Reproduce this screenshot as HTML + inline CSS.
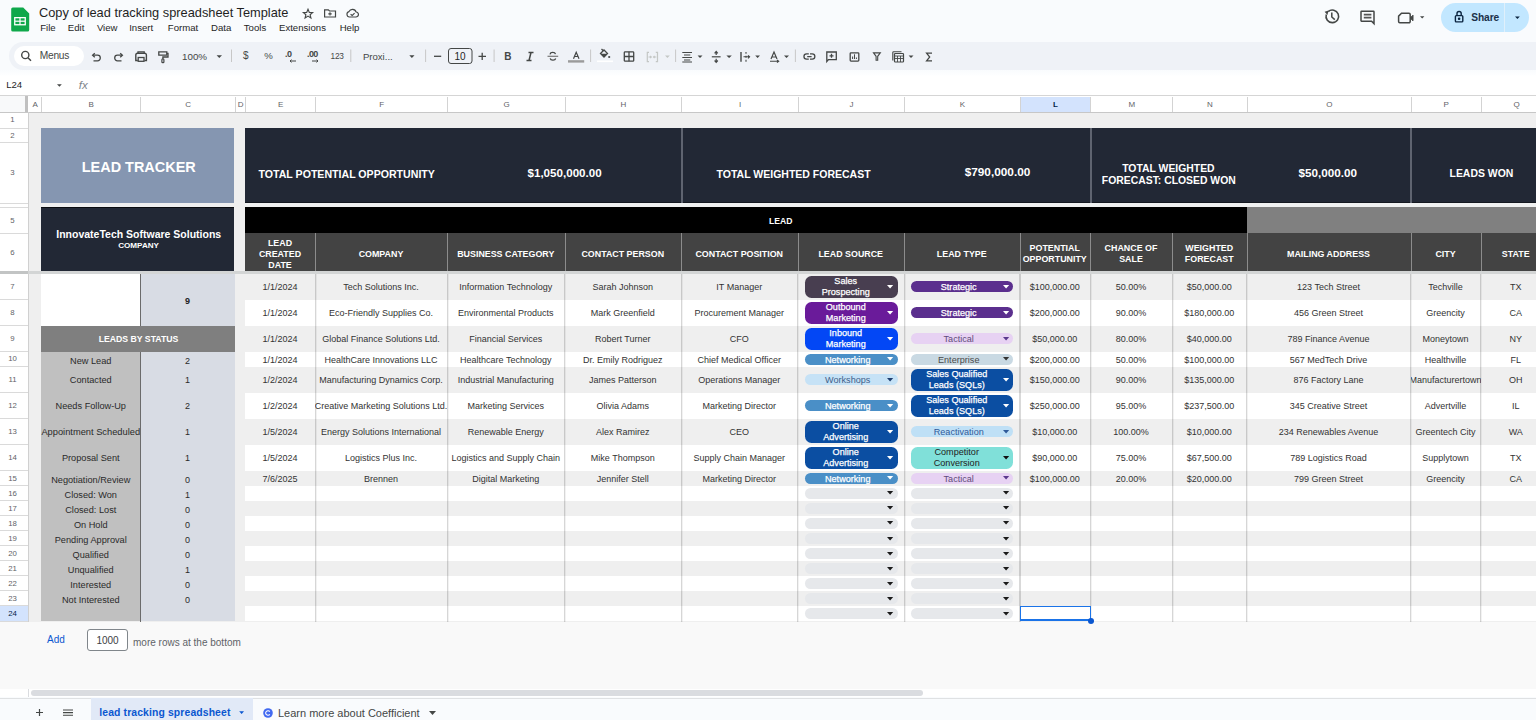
<!DOCTYPE html>
<html><head><meta charset="utf-8"><title>lead tracking spreadsheet</title>
<style>
*{margin:0;padding:0;box-sizing:border-box}
html,body{width:1536px;height:720px;overflow:hidden;background:#f9fbfd;font-family:"Liberation Sans",sans-serif;position:relative}
div{position:absolute}
.c{display:flex;align-items:center;justify-content:center;text-align:center;overflow:hidden;white-space:nowrap;color:#222;font-size:8px;line-height:1.1}
.h{color:#fff;font-weight:bold}
.chip{display:flex;align-items:center;justify-content:center;color:#fff;font-size:8px;line-height:9px;text-align:center;white-space:normal;overflow:hidden}
.arr{width:0;height:0;border-left:3.5px solid transparent;border-right:3.5px solid transparent;border-top:4px solid #fff}
.ui{font-family:"Liberation Sans",sans-serif;color:#444746}
svg{position:absolute}
</style></head><body>
<svg style="left:11px;top:7px" width="19" height="25" viewBox="0 0 19 25">
<path d="M1.8 0.4H12.2L18.2 6.4V23A1.6 1.6 0 0 1 16.6 24.6H1.8A1.6 1.6 0 0 1 0.2 23V2A1.6 1.6 0 0 1 1.8 0.4Z" fill="#0fa84b"/>
<rect x="3.1" y="10" width="11.8" height="8.4" fill="#fff"/>
<rect x="4.4" y="11.3" width="4" height="2.3" fill="#0fa84b"/><rect x="9.6" y="11.3" width="4" height="2.3" fill="#0fa84b"/>
<rect x="4.4" y="14.8" width="4" height="2.3" fill="#0fa84b"/><rect x="9.6" y="14.8" width="4" height="2.3" fill="#0fa84b"/>
</svg><div class="" style="left:39px;top:5px;width:300px;height:16px;font-size:12.8px;color:#1f1f1f;line-height:16px;white-space:nowrap">Copy of lead tracking spreadsheet Template</div><div class="" style="left:40.2px;top:22.3px;width:70px;height:12px;font-size:9.6px;color:#1f1f1f;line-height:12px;white-space:nowrap">File</div><div class="" style="left:67.8px;top:22.3px;width:70px;height:12px;font-size:9.6px;color:#1f1f1f;line-height:12px;white-space:nowrap">Edit</div><div class="" style="left:96.9px;top:22.3px;width:70px;height:12px;font-size:9.6px;color:#1f1f1f;line-height:12px;white-space:nowrap">View</div><div class="" style="left:129.2px;top:22.3px;width:70px;height:12px;font-size:9.6px;color:#1f1f1f;line-height:12px;white-space:nowrap">Insert</div><div class="" style="left:167.8px;top:22.3px;width:70px;height:12px;font-size:9.6px;color:#1f1f1f;line-height:12px;white-space:nowrap">Format</div><div class="" style="left:211px;top:22.3px;width:70px;height:12px;font-size:9.6px;color:#1f1f1f;line-height:12px;white-space:nowrap">Data</div><div class="" style="left:243.8px;top:22.3px;width:70px;height:12px;font-size:9.6px;color:#1f1f1f;line-height:12px;white-space:nowrap">Tools</div><div class="" style="left:279px;top:22.3px;width:70px;height:12px;font-size:9.6px;color:#1f1f1f;line-height:12px;white-space:nowrap">Extensions</div><div class="" style="left:339.7px;top:22.3px;width:70px;height:12px;font-size:9.6px;color:#1f1f1f;line-height:12px;white-space:nowrap">Help</div><svg style="left:0;top:0" width="1536" height="100" viewBox="0 0 1536 100" fill="none" stroke="#444746" stroke-width="1.25">
<!-- star --><path d="M308 9.3L309.3 12.4L312.6 12.6L310.1 14.7L310.9 17.9L308 16.1L305.1 17.9L305.9 14.7L303.4 12.6L306.7 12.4Z" stroke-width="1.15"/>
<!-- folder --><path d="M324.6 9.8H328.3L329.5 11H335.5V17H324.6Z" stroke-width="1.2"/><path d="M330 12.2V15.6M328.3 13.9H331.7" stroke-width="1.1"/>
<!-- cloud --><path d="M349.5 17H355.8A2.5 2.5 0 0 0 356.1 12A3.8 3.8 0 0 0 349 11.6A2.75 2.75 0 0 0 349.5 17Z" stroke-width="1.15"/><path d="M350.6 14.3L352.2 15.5L354.6 13.1" stroke-width="1.1"/>
<!-- history --><path d="M1326.3 14.5A6.3 6.3 0 1 0 1328.2 11.6" stroke-width="1.6"/><path d="M1324.6 11.8L1328.6 10.6L1327.4 15Z" fill="#444746" stroke="none"/><path d="M1331.8 12.6V17L1334.8 19.6" stroke-width="1.5"/>
<!-- comment --><path d="M1361.5 11.3H1373.5A0.6 0.6 0 0 1 1374 11.8V23.6L1371.6 21.2H1361.5A0.6 0.6 0 0 1 1361 20.7V11.8A0.6 0.6 0 0 1 1361.5 11.3Z" stroke-width="1.5"/><path d="M1363.8 14.6H1371.4M1363.8 17.6H1371.4" stroke-width="1.6" stroke="#555"/>
<!-- meet --><path d="M1401.5 13.2H1409A1.2 1.2 0 0 1 1410.2 14.4V21.6A1.2 1.2 0 0 1 1409 22.8H1399.8A1.2 1.2 0 0 1 1398.6 21.6V16.1Z" stroke-width="1.5"/><path d="M1410.2 18L1413 15.2V20.8Z" fill="#444746" stroke-width="1"/>
<path d="M1420 16.2H1424.4L1422.2 18.4Z" fill="#444746" stroke="none"/>
</svg><div class="" style="left:1441px;top:3px;width:87.5px;height:28.7px;background:#c2e7ff;border-radius:14.5px"></div><div class="" style="left:1504px;top:3px;width:1px;height:28.7px;background:#e0f0fb"></div><svg style="left:1452px;top:9px" width="14" height="15" viewBox="0 0 14 15" fill="none" stroke="#0b2440" stroke-width="1.4">
<rect x="3.4" y="6.6" width="7.4" height="6.3" rx="0.9"/><path d="M5 6.6V4.6A2.1 2.1 0 0 1 9.2 4.6V6.6"/><circle cx="7.1" cy="9.8" r="0.6" fill="#0b2440"/></svg><div class="" style="left:1471.3px;top:11.2px;width:40px;height:14px;font-size:10.2px;color:#1b3149;line-height:14px;font-weight:bold;letter-spacing:-0.1px">Share</div><svg style="left:1513.5px;top:16px" width="8" height="5" viewBox="0 0 8 5"><path d="M1 0.6H5.8L3.4 3Z" fill="#0b2440"/></svg><div class="" style="left:8.5px;top:42px;width:1600px;height:28px;background:#eff2f7;border-radius:14px"></div><div class="" style="left:14.4px;top:46px;width:69.2px;height:19.6px;background:#fff;border-radius:10px"></div><div class="" style="left:39.8px;top:48.6px;width:40px;height:13px;font-size:10.2px;color:#444746;line-height:13px;letter-spacing:-0.25px">Menus</div><svg style="left:0px;top:0px" width="1000" height="72" viewBox="0 0 1000 72" fill="none" stroke="#444746" stroke-width="1.3">
<!-- search --><circle cx="25.3" cy="55" r="3.6" stroke-width="1.4"/><path d="M28 57.8L31 60.8" stroke-width="1.5"/>
<!-- undo --><path d="M93 55.2H97.5A2.8 2.8 0 0 1 97.5 60.8H93.5"/><path d="M94.8 53.2L92.6 55.2L94.8 57.2"/>
<!-- redo --><path d="M122 55.2H117.5A2.8 2.8 0 0 0 117.5 60.8H121.5"/><path d="M120.2 53.2L122.4 55.2L120.2 57.2"/>
<!-- print --><path d="M137.8 60.5H135.8V55A1.8 1.8 0 0 1 137.6 53.2H144.6A1.8 1.8 0 0 1 146.4 55V60.5H144.4" stroke-width="1.4"/><path d="M138 53V51.8H144.2V53" stroke-width="1.3"/><rect x="138.2" y="57.5" width="5.8" height="3.8" stroke-width="1.3"/>
<!-- paint format --><path d="M158.8 51.8H166.8V55.2H158.8Z" stroke-width="1.3"/><path d="M166.8 53.5H168V57H162.9V59" stroke-width="1.3"/><rect x="161.9" y="59" width="2" height="3.7" rx="0.8" stroke-width="1.2"/>
<!-- zoom arrow --><path d="M216.6 55.2H222L219.3 57.9Z" fill="#444746" stroke="none"/>
<path d="M231.5 49.5V62" stroke="#c7c7c7" stroke-width="1"/>
<!-- .0 arrows --><path d="M290 61H296M291.5 59.6L290 61L291.5 62.4" stroke-width="1"/>
<path d="M312 61H318M316.5 59.6L318 61L316.5 62.4" stroke-width="1"/>
<path d="M350.8 49.5V62" stroke="#c7c7c7" stroke-width="1"/>
<path d="M409.3 55.2H414.5L411.9 57.9Z" fill="#444746" stroke="none"/>
<path d="M425.6 49.5V62" stroke="#c7c7c7" stroke-width="1"/>
<path d="M434 56.3H441.2" stroke-width="1.3"/>
<rect x="448.5" y="48.5" width="23.5" height="15" rx="2.5" stroke="#444746" stroke-width="1"/>
<path d="M482.2 52.7V60M478.5 56.3H486" stroke-width="1.3"/>
<path d="M494.1 49.5V62" stroke="#c7c7c7" stroke-width="1"/>
<!-- S strike --><path d="M547.5 56.3H558.2" stroke="#777" stroke-width="1.2"/>
<path d="M555.5 54.2A2.8 2.2 0 0 0 550 54.3" stroke-width="1.3"/><path d="M550.2 58.3A2.8 2.2 0 0 0 555.7 58.5" stroke-width="1.3"/>
<!-- A underline --><path d="M573.5 58.8L576.2 52.3L579 58.8M574.5 56.5H578" stroke-width="1.2"/><rect x="568" y="60.2" width="16.2" height="2.4" fill="#9b9b9b" stroke="none"/>
<path d="M590.6 49.5V62" stroke="#c7c7c7" stroke-width="1"/>
<!-- fill --><path d="M600.5 53.5L604 50L607.5 53.5L604 57Z" stroke-width="1.3"/><path d="M601 53.8H607L604 57Z" fill="#444746" stroke="none"/><path d="M601.5 49L603.5 51" stroke-width="1.2"/><circle cx="609.2" cy="57" r="1.1" fill="#444746" stroke="none"/>
<rect x="597" y="60.5" width="16" height="1.6" fill="#fff" stroke="none"/>
<!-- borders --><rect x="624.3" y="51.8" width="9.4" height="9.4" rx="0.8" stroke-width="1.3"/><path d="M629 51.8V61.2M624.3 56.5H633.7" stroke-width="1.3"/>
<!-- merge --><g stroke="#c4c7c5" stroke-width="1.2"><path d="M649 52.3H647.3V61.7H649M655.8 52.3H657.5V61.7H655.8"/><path d="M648.5 57H651.2M650.2 56L651.2 57L650.2 58M656.3 57H653.6M654.6 56L653.6 57L654.6 58"/></g>
<path d="M665 55.5H669.8L667.4 58Z" fill="#c4c7c5" stroke="none"/>
<path d="M675.6 49.5V62" stroke="#c7c7c7" stroke-width="1"/>
<!-- halign --><path d="M682.3 52.5H692M684 55H690.3M682.3 57.5H692M684 60H690.3M682.3 62H692" stroke-width="1.2"/>
<path d="M697.6 55.5H702.5L700 58Z" fill="#444746" stroke="none"/>
<!-- valign --><path d="M711.8 56.8H720.6" stroke-width="1.2"/><path d="M716.2 51.5V55M714.6 53.3L716.2 51.5L717.8 53.3M716.2 62.3V58.7M714.6 60.5L716.2 62.3L717.8 60.5" stroke-width="1.2"/>
<path d="M726.4 55.5H731.8L729.1 58Z" fill="#444746" stroke="none"/>
<!-- wrap --><path d="M741 52V61.8" stroke-width="1.4"/><path d="M746 52V53.8M746 55.8V57.7M746 59.7V61.8" stroke-width="1.1"/><path d="M743.5 56.8H749.5M748 55.3L749.6 56.8L748 58.3" stroke-width="1.1"/>
<path d="M755.2 55.5H760L757.6 58Z" fill="#444746" stroke="none"/>
<!-- rotate --><path d="M771 59L774 52L777 59M772 57H776" stroke-width="1.2"/><path d="M770 61.3H778.5M777 60L778.7 61.3L777 62.6" stroke-width="1.1"/>
<path d="M784 55.5H789L786.5 58Z" fill="#444746" stroke="none"/>
<path d="M795.4 49.5V62" stroke="#c7c7c7" stroke-width="1"/>
<!-- link --><path d="M808.8 53.9H806.6A2.65 2.65 0 0 0 806.6 59.2H808.8M810 53.9H812.2A2.65 2.65 0 0 1 812.2 59.2H810M807.2 56.55H811.6" stroke-width="1.3"/>
<!-- comment --><path d="M826.8 52H836.3V59.6H828.5L826.8 61.5Z" stroke-width="1.3"/><path d="M831.5 53.8V57.8M829.5 55.8H833.5" stroke-width="1.3"/>
<!-- chart --><rect x="850.2" y="52.8" width="8.6" height="8.3" rx="0.8" stroke-width="1.3"/><path d="M852.6 59V56.5M854.5 59V54.3M856.4 59V57.5" stroke-width="1"/>
<!-- filter --><path d="M873.5 52.9H880.3L877.7 56.3V60.3H876.1V56.3Z" stroke-width="1.1"/>
<!-- functions table --><rect x="894.5" y="53.5" width="9" height="8.5" rx="0.8" stroke-width="1.2"/><path d="M892.8 60.5V52.5A0.8 0.8 0 0 1 893.6 51.7H901.5" stroke-width="1.1"/><path d="M894.5 56H903.5M894.5 58.5H903.5M897.5 56V62M900.5 56V62" stroke-width="0.9"/>
<path d="M908.6 55.5H913.5L911 58Z" fill="#444746" stroke="none"/>
<!-- sigma --><path d="M932 53.2H926.6L929.7 57L926.6 60.8H932" stroke-width="1.25"/>
</svg><div class="" style="left:182px;top:49.5px;width:40px;height:13px;font-size:9.8px;color:#444746;line-height:13px;white-space:nowrap">100%</div><div class="" style="left:243px;top:48.8px;width:10px;height:13px;font-size:10px;color:#444746;line-height:13px">$</div><div class="" style="left:264.3px;top:48.8px;width:10px;height:13px;font-size:9.6px;color:#444746;line-height:13px">%</div><div class="" style="left:285px;top:47.5px;width:15px;height:12px;font-size:9px;color:#444746;line-height:12px;font-weight:bold;letter-spacing:-0.4px">.0</div><div class="" style="left:307px;top:47.5px;width:15px;height:12px;font-size:9px;color:#444746;line-height:12px;font-weight:bold;letter-spacing:-0.6px">.00</div><div class="" style="left:330.5px;top:50px;width:20px;height:12px;font-size:8.3px;color:#444746;line-height:12px;letter-spacing:-0.2px">123</div><div class="" style="left:362.9px;top:49.5px;width:40px;height:13px;font-size:9.6px;color:#444746;line-height:13px;white-space:nowrap">Proxi...</div><div class="" style="left:454.5px;top:49.5px;width:15px;height:13px;font-size:10px;color:#1f1f1f;line-height:13px">10</div><div class="" style="left:504.2px;top:50px;width:10px;height:13px;font-size:10px;color:#444746;line-height:13px;font-weight:bold">B</div><svg style="left:525px;top:51px" width="10" height="11" viewBox="0 0 10 11" fill="none" stroke="#444746" stroke-width="1.5"><path d="M3.5 1.5H8.5M1.5 9.5H6.5M6 1.5L4 9.5"/></svg><div class="" style="left:0px;top:70px;width:1536px;height:26px;background:linear-gradient(#f9fbfd 0px,#fdfeff 5px,#fff 6px)"></div><div class="" style="left:6.2px;top:78.6px;width:30px;height:12px;font-size:9.6px;color:#1f1f1f;line-height:12px">L24</div><svg style="left:56px;top:83px" width="8" height="5" viewBox="0 0 8 5"><path d="M1 1.3H5.8L3.4 3.8Z" fill="#444746"/></svg><div class="" style="left:78.8px;top:77.5px;width:20px;height:14px;font-size:11.5px;color:#80868b;line-height:14px;font-style:italic;font-family:"Liberation Serif",serif">fx</div><div class="" style="left:0px;top:96px;width:1536px;height:525.3px;background:#fff"></div><div class="" style="left:0px;top:96px;width:25px;height:16px;background:#f8f9fa"></div><div class="" style="left:25px;top:96px;width:3px;height:16px;background:#c0c0c0"></div><div class="c" style="left:28px;top:96.5px;width:13px;height:15.5px;background:#fff;color:#5f6368;font-weight:normal;font-size:8px;line-height:15.5px;padding-left:1.5px">A</div><div class="c" style="left:41px;top:96.5px;width:99px;height:15.5px;background:#fff;color:#5f6368;font-weight:normal;font-size:8px;line-height:15.5px;padding-left:1.5px">B</div><div class="c" style="left:140px;top:96.5px;width:95px;height:15.5px;background:#fff;color:#5f6368;font-weight:normal;font-size:8px;line-height:15.5px;padding-left:1.5px">C</div><div class="c" style="left:235px;top:96.5px;width:10px;height:15.5px;background:#fff;color:#5f6368;font-weight:normal;font-size:8px;line-height:15.5px;padding-left:1.5px">D</div><div class="c" style="left:245px;top:96.5px;width:70px;height:15.5px;background:#fff;color:#5f6368;font-weight:normal;font-size:8px;line-height:15.5px;padding-left:1.5px">E</div><div class="c" style="left:315px;top:96.5px;width:132px;height:15.5px;background:#fff;color:#5f6368;font-weight:normal;font-size:8px;line-height:15.5px;padding-left:1.5px">F</div><div class="c" style="left:447px;top:96.5px;width:117.5px;height:15.5px;background:#fff;color:#5f6368;font-weight:normal;font-size:8px;line-height:15.5px;padding-left:1.5px">G</div><div class="c" style="left:564.5px;top:96.5px;width:116.5px;height:15.5px;background:#fff;color:#5f6368;font-weight:normal;font-size:8px;line-height:15.5px;padding-left:1.5px">H</div><div class="c" style="left:681px;top:96.5px;width:116.5px;height:15.5px;background:#fff;color:#5f6368;font-weight:normal;font-size:8px;line-height:15.5px;padding-left:1.5px">I</div><div class="c" style="left:797.5px;top:96.5px;width:106.5px;height:15.5px;background:#fff;color:#5f6368;font-weight:normal;font-size:8px;line-height:15.5px;padding-left:1.5px">J</div><div class="c" style="left:904px;top:96.5px;width:115.5px;height:15.5px;background:#fff;color:#5f6368;font-weight:normal;font-size:8px;line-height:15.5px;padding-left:1.5px">K</div><div class="c" style="left:1019.5px;top:96.5px;width:70.5px;height:15.5px;background:#d3e3fd;color:#041e49;font-weight:bold;font-size:8px;line-height:15.5px;padding-left:1.5px">L</div><div class="c" style="left:1090px;top:96.5px;width:82px;height:15.5px;background:#fff;color:#5f6368;font-weight:normal;font-size:8px;line-height:15.5px;padding-left:1.5px">M</div><div class="c" style="left:1172px;top:96.5px;width:74.5px;height:15.5px;background:#fff;color:#5f6368;font-weight:normal;font-size:8px;line-height:15.5px;padding-left:1.5px">N</div><div class="c" style="left:1246.5px;top:96.5px;width:164.0px;height:15.5px;background:#fff;color:#5f6368;font-weight:normal;font-size:8px;line-height:15.5px;padding-left:1.5px">O</div><div class="c" style="left:1410.5px;top:96.5px;width:70.0px;height:15.5px;background:#fff;color:#5f6368;font-weight:normal;font-size:8px;line-height:15.5px;padding-left:1.5px">P</div><div class="c" style="left:1480.5px;top:96.5px;width:70.5px;height:15.5px;background:#fff;color:#5f6368;font-weight:normal;font-size:8px;line-height:15.5px;padding-left:1.5px">Q</div><div class="" style="left:41px;top:96.5px;width:1px;height:15.5px;background:#d3d3d3"></div><div class="" style="left:140px;top:96.5px;width:1px;height:15.5px;background:#d3d3d3"></div><div class="" style="left:235px;top:96.5px;width:1px;height:15.5px;background:#d3d3d3"></div><div class="" style="left:245px;top:96.5px;width:1px;height:15.5px;background:#d3d3d3"></div><div class="" style="left:315px;top:96.5px;width:1px;height:15.5px;background:#d3d3d3"></div><div class="" style="left:447px;top:96.5px;width:1px;height:15.5px;background:#d3d3d3"></div><div class="" style="left:564.5px;top:96.5px;width:1px;height:15.5px;background:#d3d3d3"></div><div class="" style="left:681px;top:96.5px;width:1px;height:15.5px;background:#d3d3d3"></div><div class="" style="left:797.5px;top:96.5px;width:1px;height:15.5px;background:#d3d3d3"></div><div class="" style="left:904px;top:96.5px;width:1px;height:15.5px;background:#d3d3d3"></div><div class="" style="left:1019.5px;top:96.5px;width:1px;height:15.5px;background:#d3d3d3"></div><div class="" style="left:1090px;top:96.5px;width:1px;height:15.5px;background:#d3d3d3"></div><div class="" style="left:1172px;top:96.5px;width:1px;height:15.5px;background:#d3d3d3"></div><div class="" style="left:1246.5px;top:96.5px;width:1px;height:15.5px;background:#d3d3d3"></div><div class="" style="left:1410.5px;top:96.5px;width:1px;height:15.5px;background:#d3d3d3"></div><div class="" style="left:1480.5px;top:96.5px;width:1px;height:15.5px;background:#d3d3d3"></div><div class="" style="left:1551px;top:96.5px;width:1px;height:15.5px;background:#d3d3d3"></div><div class="" style="left:0px;top:95px;width:1536px;height:1px;background:#d5d5d5"></div><div class="" style="left:0px;top:112px;width:1536px;height:1px;background:#c7c7c7"></div><div class="c" style="left:0px;top:112.6px;width:25px;height:16px;background:#fff;color:#5f6368;font-weight:normal;font-size:7.8px">1</div><div class="c" style="left:0px;top:128.6px;width:25px;height:14.5px;background:#fff;color:#5f6368;font-weight:normal;font-size:7.8px">2</div><div class="c" style="left:0px;top:143.1px;width:25px;height:60.5px;background:#fff;color:#5f6368;font-weight:normal;font-size:7.8px">3</div><div class="c" style="left:0px;top:203.6px;width:25px;height:4.5px;background:#fff;color:#5f6368;font-weight:normal;font-size:7.8px"></div><div class="c" style="left:0px;top:208.1px;width:25px;height:26.0px;background:#fff;color:#5f6368;font-weight:normal;font-size:7.8px">5</div><div class="c" style="left:0px;top:234.1px;width:25px;height:37.5px;background:#fff;color:#5f6368;font-weight:normal;font-size:7.8px">6</div><div class="c" style="left:0px;top:274.1px;width:25px;height:26.0px;background:#fff;color:#5f6368;font-weight:normal;font-size:7.8px">7</div><div class="c" style="left:0px;top:300.1px;width:25px;height:26.0px;background:#fff;color:#5f6368;font-weight:normal;font-size:7.8px">8</div><div class="c" style="left:0px;top:326.1px;width:25px;height:26.0px;background:#fff;color:#5f6368;font-weight:normal;font-size:7.8px">9</div><div class="c" style="left:0px;top:352.1px;width:25px;height:15.0px;background:#fff;color:#5f6368;font-weight:normal;font-size:7.8px">10</div><div class="c" style="left:0px;top:367.1px;width:25px;height:26.0px;background:#fff;color:#5f6368;font-weight:normal;font-size:7.8px">11</div><div class="c" style="left:0px;top:393.1px;width:25px;height:26.0px;background:#fff;color:#5f6368;font-weight:normal;font-size:7.8px">12</div><div class="c" style="left:0px;top:419.1px;width:25px;height:26.0px;background:#fff;color:#5f6368;font-weight:normal;font-size:7.8px">13</div><div class="c" style="left:0px;top:445.1px;width:25px;height:26.30000000000001px;background:#fff;color:#5f6368;font-weight:normal;font-size:7.8px">14</div><div class="c" style="left:0px;top:471.40000000000003px;width:25px;height:14.899999999999977px;background:#fff;color:#5f6368;font-weight:normal;font-size:7.8px">15</div><div class="c" style="left:0px;top:486.3px;width:25px;height:15.0px;background:#fff;color:#5f6368;font-weight:normal;font-size:7.8px">16</div><div class="c" style="left:0px;top:501.3px;width:25px;height:15.000000000000057px;background:#fff;color:#5f6368;font-weight:normal;font-size:7.8px">17</div><div class="c" style="left:0px;top:516.3000000000001px;width:25px;height:15.099999999999909px;background:#fff;color:#5f6368;font-weight:normal;font-size:7.8px">18</div><div class="c" style="left:0px;top:531.4px;width:25px;height:15.0px;background:#fff;color:#5f6368;font-weight:normal;font-size:7.8px">19</div><div class="c" style="left:0px;top:546.4px;width:25px;height:15.0px;background:#fff;color:#5f6368;font-weight:normal;font-size:7.8px">20</div><div class="c" style="left:0px;top:561.4px;width:25px;height:15.0px;background:#fff;color:#5f6368;font-weight:normal;font-size:7.8px">21</div><div class="c" style="left:0px;top:576.4px;width:25px;height:15.0px;background:#fff;color:#5f6368;font-weight:normal;font-size:7.8px">22</div><div class="c" style="left:0px;top:591.4px;width:25px;height:15.0px;background:#fff;color:#5f6368;font-weight:normal;font-size:7.8px">23</div><div class="c" style="left:0px;top:606.4px;width:25px;height:15.5px;background:#d3e3fd;color:#041e49;font-weight:normal;font-size:7.8px">24</div><div class="" style="left:25px;top:605.8px;width:3px;height:15.5px;background:#d3e3fd"></div><div class="" style="left:0px;top:127.5px;width:28px;height:1px;background:#dadada"></div><div class="" style="left:0px;top:142.0px;width:28px;height:1px;background:#dadada"></div><div class="" style="left:0px;top:202.5px;width:28px;height:1px;background:#dadada"></div><div class="" style="left:0px;top:207.0px;width:28px;height:1px;background:#dadada"></div><div class="" style="left:0px;top:233.0px;width:28px;height:1px;background:#dadada"></div><div class="" style="left:0px;top:270.5px;width:28px;height:1px;background:#dadada"></div><div class="" style="left:0px;top:299.0px;width:28px;height:1px;background:#dadada"></div><div class="" style="left:0px;top:325.0px;width:28px;height:1px;background:#dadada"></div><div class="" style="left:0px;top:351.0px;width:28px;height:1px;background:#dadada"></div><div class="" style="left:0px;top:366.0px;width:28px;height:1px;background:#dadada"></div><div class="" style="left:0px;top:392.0px;width:28px;height:1px;background:#dadada"></div><div class="" style="left:0px;top:418.0px;width:28px;height:1px;background:#dadada"></div><div class="" style="left:0px;top:444.0px;width:28px;height:1px;background:#dadada"></div><div class="" style="left:0px;top:470.3px;width:28px;height:1px;background:#dadada"></div><div class="" style="left:0px;top:485.2px;width:28px;height:1px;background:#dadada"></div><div class="" style="left:0px;top:500.2px;width:28px;height:1px;background:#dadada"></div><div class="" style="left:0px;top:515.2px;width:28px;height:1px;background:#dadada"></div><div class="" style="left:0px;top:530.3px;width:28px;height:1px;background:#dadada"></div><div class="" style="left:0px;top:545.3px;width:28px;height:1px;background:#dadada"></div><div class="" style="left:0px;top:560.3px;width:28px;height:1px;background:#dadada"></div><div class="" style="left:0px;top:575.3px;width:28px;height:1px;background:#dadada"></div><div class="" style="left:0px;top:590.3px;width:28px;height:1px;background:#dadada"></div><div class="" style="left:0px;top:605.3px;width:28px;height:1px;background:#dadada"></div><div class="" style="left:0px;top:620.8px;width:28px;height:1px;background:#dadada"></div><div class="" style="left:27.5px;top:112px;width:1px;height:510px;background:#d0d0d0"></div><div class="" style="left:28.5px;top:112.5px;width:1536px;height:158.5px;background:#efefef"></div><div class="" style="left:41px;top:127.5px;width:193px;height:75px;background:#8596b1"></div><div style="left:-11.25px;width:300px;text-align:center;top:158.68px;font-size:14.45px;line-height:16.62px;font-weight:bold;white-space:nowrap;color:#fff">LEAD TRACKER</div><div class="" style="left:245px;top:127.5px;width:1300px;height:75px;background:#222835;border-bottom:1px solid #141820"></div><div style="left:258.5px;top:167.83px;font-size:10.6px;line-height:12.19px;font-weight:bold;white-space:nowrap;color:#fff">TOTAL POTENTIAL OPPORTUNITY</div><div style="left:527.5px;top:166.31px;font-size:11.6px;line-height:13.34px;font-weight:bold;white-space:nowrap;color:#fff">$1,050,000.00</div><div style="left:716.6px;top:167.92px;font-size:10.5px;line-height:12.07px;font-weight:bold;white-space:nowrap;color:#fff">TOTAL WEIGHTED FORECAST</div><div style="left:964.7px;top:166.13px;font-size:11.8px;line-height:13.57px;font-weight:bold;white-space:nowrap;color:#fff">$790,000.00</div><div style="left:1018.4000000000001px;width:300px;text-align:center;top:162.92px;font-size:10.4px;line-height:11.96px;font-weight:bold;white-space:nowrap;color:#fff">TOTAL WEIGHTED</div><div style="left:1018.8px;width:300px;text-align:center;top:175.02px;font-size:10.4px;line-height:11.96px;font-weight:bold;white-space:nowrap;color:#fff">FORECAST: CLOSED WON</div><div style="left:1298.5px;top:166.22px;font-size:11.7px;line-height:13.45px;font-weight:bold;white-space:nowrap;color:#fff">$50,000.00</div><div style="left:1449.5px;top:168.17px;font-size:10.45px;line-height:12.02px;font-weight:bold;white-space:nowrap;color:#fff">LEADS WON</div><div class="" style="left:680.5px;top:127.5px;width:2px;height:75px;background:#5f6470"></div><div class="" style="left:1089.5px;top:127.5px;width:2px;height:75px;background:#5f6470"></div><div class="" style="left:1409.8px;top:127.5px;width:2px;height:75px;background:#5f6470"></div><div class="" style="left:245px;top:202.5px;width:1300px;height:4.8px;background:#f0f1f1"></div><div class="" style="left:41px;top:207.3px;width:193px;height:63.7px;background:#222835;border-top:1px solid #0a0c10"></div><div style="left:-11.25px;width:300px;text-align:center;top:228.12px;font-size:10.5px;line-height:12.07px;font-weight:bold;white-space:nowrap;color:#fff">InnovateTech Software Solutions</div><div style="left:-11.400000000000006px;width:300px;text-align:center;top:240.94px;font-size:8.1px;line-height:9.31px;font-weight:bold;white-space:nowrap;color:#fff">COMPANY</div><div class="" style="left:245px;top:207.3px;width:1001.5px;height:25.9px;background:#000"></div><div style="left:630.7px;width:300px;text-align:center;top:216.58px;font-size:8.6px;line-height:9.89px;font-weight:bold;white-space:nowrap;color:#fff">LEAD</div><div class="" style="left:1246.5px;top:207.3px;width:300px;height:25.9px;background:#808080"></div><div class="" style="left:245px;top:233.2px;width:1300px;height:38px;background:#434343"></div><div style="left:130.0px;width:300px;text-align:center;top:237.90px;font-size:8.9px;line-height:10.23px;font-weight:bold;white-space:nowrap;color:#fff">LEAD</div><div style="left:130.0px;width:300px;text-align:center;top:248.80px;font-size:8.9px;line-height:10.23px;font-weight:bold;white-space:nowrap;color:#fff">CREATED</div><div style="left:130.0px;width:300px;text-align:center;top:259.70px;font-size:8.9px;line-height:10.23px;font-weight:bold;white-space:nowrap;color:#fff">DATE</div><div class="" style="left:315px;top:233.2px;width:1px;height:38px;background:#8c8c8c"></div><div style="left:231.0px;width:300px;text-align:center;top:248.80px;font-size:8.9px;line-height:10.23px;font-weight:bold;white-space:nowrap;color:#fff">COMPANY</div><div class="" style="left:447px;top:233.2px;width:1px;height:38px;background:#8c8c8c"></div><div style="left:355.75px;width:300px;text-align:center;top:248.80px;font-size:8.9px;line-height:10.23px;font-weight:bold;white-space:nowrap;color:#fff">BUSINESS CATEGORY</div><div class="" style="left:564.5px;top:233.2px;width:1px;height:38px;background:#8c8c8c"></div><div style="left:472.75px;width:300px;text-align:center;top:248.80px;font-size:8.9px;line-height:10.23px;font-weight:bold;white-space:nowrap;color:#fff">CONTACT PERSON</div><div class="" style="left:681px;top:233.2px;width:1px;height:38px;background:#8c8c8c"></div><div style="left:589.25px;width:300px;text-align:center;top:248.80px;font-size:8.9px;line-height:10.23px;font-weight:bold;white-space:nowrap;color:#fff">CONTACT POSITION</div><div class="" style="left:797.5px;top:233.2px;width:1px;height:38px;background:#8c8c8c"></div><div style="left:700.75px;width:300px;text-align:center;top:248.80px;font-size:8.9px;line-height:10.23px;font-weight:bold;white-space:nowrap;color:#fff">LEAD SOURCE</div><div class="" style="left:904px;top:233.2px;width:1px;height:38px;background:#8c8c8c"></div><div style="left:811.75px;width:300px;text-align:center;top:248.80px;font-size:8.9px;line-height:10.23px;font-weight:bold;white-space:nowrap;color:#fff">LEAD TYPE</div><div class="" style="left:1019.5px;top:233.2px;width:1px;height:38px;background:#8c8c8c"></div><div style="left:904.75px;width:300px;text-align:center;top:243.35px;font-size:8.9px;line-height:10.23px;font-weight:bold;white-space:nowrap;color:#fff">POTENTIAL</div><div style="left:904.75px;width:300px;text-align:center;top:254.25px;font-size:8.9px;line-height:10.23px;font-weight:bold;white-space:nowrap;color:#fff">OPPORTUNITY</div><div class="" style="left:1090px;top:233.2px;width:1px;height:38px;background:#8c8c8c"></div><div style="left:981.0px;width:300px;text-align:center;top:243.35px;font-size:8.9px;line-height:10.23px;font-weight:bold;white-space:nowrap;color:#fff">CHANCE OF</div><div style="left:981.0px;width:300px;text-align:center;top:254.25px;font-size:8.9px;line-height:10.23px;font-weight:bold;white-space:nowrap;color:#fff">SALE</div><div class="" style="left:1172px;top:233.2px;width:1px;height:38px;background:#8c8c8c"></div><div style="left:1059.25px;width:300px;text-align:center;top:243.35px;font-size:8.9px;line-height:10.23px;font-weight:bold;white-space:nowrap;color:#fff">WEIGHTED</div><div style="left:1059.25px;width:300px;text-align:center;top:254.25px;font-size:8.9px;line-height:10.23px;font-weight:bold;white-space:nowrap;color:#fff">FORECAST</div><div class="" style="left:1246.5px;top:233.2px;width:1px;height:38px;background:#8c8c8c"></div><div style="left:1178.5px;width:300px;text-align:center;top:248.80px;font-size:8.9px;line-height:10.23px;font-weight:bold;white-space:nowrap;color:#fff">MAILING ADDRESS</div><div class="" style="left:1410.5px;top:233.2px;width:1px;height:38px;background:#8c8c8c"></div><div style="left:1295.5px;width:300px;text-align:center;top:248.80px;font-size:8.9px;line-height:10.23px;font-weight:bold;white-space:nowrap;color:#fff">CITY</div><div class="" style="left:1480.5px;top:233.2px;width:1px;height:38px;background:#8c8c8c"></div><div style="left:1365.75px;width:300px;text-align:center;top:248.80px;font-size:8.9px;line-height:10.23px;font-weight:bold;white-space:nowrap;color:#fff">STATE</div><div class="" style="left:0px;top:271px;width:28px;height:2.7px;background:#c2c4c4"></div><div class="" style="left:28px;top:271px;width:1510px;height:2.7px;background:#d3d5d5"></div><div class="" style="left:28.5px;top:273.5px;width:1536px;height:348px;background:#efefef"></div><div class="" style="left:245px;top:273.5px;width:1300px;height:26.0px;background:#efefef"></div><div class="" style="left:245px;top:299.5px;width:1300px;height:26.0px;background:#fff"></div><div class="" style="left:245px;top:325.5px;width:1300px;height:26.0px;background:#efefef"></div><div class="" style="left:245px;top:351.5px;width:1300px;height:15.0px;background:#fff"></div><div class="" style="left:245px;top:366.5px;width:1300px;height:26.0px;background:#efefef"></div><div class="" style="left:245px;top:392.5px;width:1300px;height:26.0px;background:#fff"></div><div class="" style="left:245px;top:418.5px;width:1300px;height:26.0px;background:#efefef"></div><div class="" style="left:245px;top:444.5px;width:1300px;height:26.30000000000001px;background:#fff"></div><div class="" style="left:245px;top:470.8px;width:1300px;height:14.899999999999977px;background:#efefef"></div><div class="" style="left:245px;top:485.7px;width:1300px;height:15.0px;background:#fff"></div><div class="" style="left:245px;top:500.7px;width:1300px;height:15.000000000000057px;background:#efefef"></div><div class="" style="left:245px;top:515.7px;width:1300px;height:15.099999999999909px;background:#fff"></div><div class="" style="left:245px;top:530.8px;width:1300px;height:15.0px;background:#efefef"></div><div class="" style="left:245px;top:545.8px;width:1300px;height:15.0px;background:#fff"></div><div class="" style="left:245px;top:560.8px;width:1300px;height:15.0px;background:#efefef"></div><div class="" style="left:245px;top:575.8px;width:1300px;height:15.0px;background:#fff"></div><div class="" style="left:245px;top:590.8px;width:1300px;height:15.0px;background:#efefef"></div><div class="" style="left:245px;top:605.8px;width:1300px;height:15.5px;background:#fff"></div><div class="c" style="left:41px;top:273.5px;width:99px;height:52.0px;background:#fff;"></div><div class="c" style="left:140px;top:273.5px;width:95px;height:52.0px;background:#d8dce4;"></div><div style="left:37.5px;width:300px;text-align:center;top:295.71px;font-size:9px;line-height:10.35px;font-weight:bold;white-space:nowrap;color:#222">9</div><div class="c" style="left:41px;top:325.5px;width:194px;height:26.0px;background:#7f7f7f;"></div><div style="left:-11.5px;width:300px;text-align:center;top:334.28px;font-size:8.7px;line-height:10.00px;font-weight:bold;white-space:nowrap;color:#fff">LEADS BY STATUS</div><div class="c" style="left:41px;top:351.5px;width:99px;height:15.0px;background:#c0c0c0;"></div><div class="c" style="left:140px;top:351.5px;width:95px;height:15.0px;background:#d8dce4;"></div><div style="left:-59.25px;width:300px;text-align:center;top:355.82px;font-size:9.2px;line-height:10.58px;font-weight:normal;white-space:nowrap;color:#2a2a2a">New Lead</div><div style="left:37.5px;width:300px;text-align:center;top:356.01px;font-size:9px;line-height:10.35px;font-weight:normal;white-space:nowrap;color:#2a2a2a">2</div><div class="c" style="left:41px;top:366.5px;width:99px;height:26.0px;background:#c0c0c0;"></div><div class="c" style="left:140px;top:366.5px;width:95px;height:26.0px;background:#d8dce4;"></div><div style="left:-59.25px;width:300px;text-align:center;top:375.12px;font-size:9.2px;line-height:10.58px;font-weight:normal;white-space:nowrap;color:#2a2a2a">Contacted</div><div style="left:37.5px;width:300px;text-align:center;top:375.31px;font-size:9px;line-height:10.35px;font-weight:normal;white-space:nowrap;color:#2a2a2a">1</div><div class="c" style="left:41px;top:392.5px;width:99px;height:26.0px;background:#c0c0c0;"></div><div class="c" style="left:140px;top:392.5px;width:95px;height:26.0px;background:#d8dce4;"></div><div style="left:-59.25px;width:300px;text-align:center;top:401.12px;font-size:9.2px;line-height:10.58px;font-weight:normal;white-space:nowrap;color:#2a2a2a">Needs Follow-Up</div><div style="left:37.5px;width:300px;text-align:center;top:401.31px;font-size:9px;line-height:10.35px;font-weight:normal;white-space:nowrap;color:#2a2a2a">2</div><div class="c" style="left:41px;top:418.5px;width:99px;height:26.0px;background:#c0c0c0;"></div><div class="c" style="left:140px;top:418.5px;width:95px;height:26.0px;background:#d8dce4;"></div><div style="left:-59.25px;width:300px;text-align:center;top:427.03px;font-size:9.3px;line-height:10.70px;font-weight:normal;white-space:nowrap;color:#2a2a2a">Appointment Scheduled</div><div style="left:37.5px;width:300px;text-align:center;top:427.31px;font-size:9px;line-height:10.35px;font-weight:normal;white-space:nowrap;color:#2a2a2a">1</div><div class="c" style="left:41px;top:444.5px;width:99px;height:26.30000000000001px;background:#c0c0c0;"></div><div class="c" style="left:140px;top:444.5px;width:95px;height:26.30000000000001px;background:#d8dce4;"></div><div style="left:-59.25px;width:300px;text-align:center;top:453.27px;font-size:9.2px;line-height:10.58px;font-weight:normal;white-space:nowrap;color:#2a2a2a">Proposal Sent</div><div style="left:37.5px;width:300px;text-align:center;top:453.46px;font-size:9px;line-height:10.35px;font-weight:normal;white-space:nowrap;color:#2a2a2a">1</div><div class="c" style="left:41px;top:470.8px;width:99px;height:14.899999999999977px;background:#c0c0c0;"></div><div class="c" style="left:140px;top:470.8px;width:95px;height:14.899999999999977px;background:#d8dce4;"></div><div style="left:-59.25px;width:300px;text-align:center;top:475.07px;font-size:9.2px;line-height:10.58px;font-weight:normal;white-space:nowrap;color:#2a2a2a">Negotiation/Review</div><div style="left:37.5px;width:300px;text-align:center;top:475.26px;font-size:9px;line-height:10.35px;font-weight:normal;white-space:nowrap;color:#2a2a2a">0</div><div class="c" style="left:41px;top:485.7px;width:99px;height:15.0px;background:#c0c0c0;"></div><div class="c" style="left:140px;top:485.7px;width:95px;height:15.0px;background:#d8dce4;"></div><div style="left:-59.25px;width:300px;text-align:center;top:490.02px;font-size:9.2px;line-height:10.58px;font-weight:normal;white-space:nowrap;color:#2a2a2a">Closed: Won</div><div style="left:37.5px;width:300px;text-align:center;top:490.21px;font-size:9px;line-height:10.35px;font-weight:normal;white-space:nowrap;color:#2a2a2a">1</div><div class="c" style="left:41px;top:500.7px;width:99px;height:15.000000000000057px;background:#c0c0c0;"></div><div class="c" style="left:140px;top:500.7px;width:95px;height:15.000000000000057px;background:#d8dce4;"></div><div style="left:-59.25px;width:300px;text-align:center;top:505.02px;font-size:9.2px;line-height:10.58px;font-weight:normal;white-space:nowrap;color:#2a2a2a">Closed: Lost</div><div style="left:37.5px;width:300px;text-align:center;top:505.21px;font-size:9px;line-height:10.35px;font-weight:normal;white-space:nowrap;color:#2a2a2a">0</div><div class="c" style="left:41px;top:515.7px;width:99px;height:15.099999999999909px;background:#c0c0c0;"></div><div class="c" style="left:140px;top:515.7px;width:95px;height:15.099999999999909px;background:#d8dce4;"></div><div style="left:-59.25px;width:300px;text-align:center;top:520.07px;font-size:9.2px;line-height:10.58px;font-weight:normal;white-space:nowrap;color:#2a2a2a">On Hold</div><div style="left:37.5px;width:300px;text-align:center;top:520.26px;font-size:9px;line-height:10.35px;font-weight:normal;white-space:nowrap;color:#2a2a2a">0</div><div class="c" style="left:41px;top:530.8px;width:99px;height:15.0px;background:#c0c0c0;"></div><div class="c" style="left:140px;top:530.8px;width:95px;height:15.0px;background:#d8dce4;"></div><div style="left:-59.25px;width:300px;text-align:center;top:535.12px;font-size:9.2px;line-height:10.58px;font-weight:normal;white-space:nowrap;color:#2a2a2a">Pending Approval</div><div style="left:37.5px;width:300px;text-align:center;top:535.31px;font-size:9px;line-height:10.35px;font-weight:normal;white-space:nowrap;color:#2a2a2a">0</div><div class="c" style="left:41px;top:545.8px;width:99px;height:15.0px;background:#c0c0c0;"></div><div class="c" style="left:140px;top:545.8px;width:95px;height:15.0px;background:#d8dce4;"></div><div style="left:-59.25px;width:300px;text-align:center;top:550.12px;font-size:9.2px;line-height:10.58px;font-weight:normal;white-space:nowrap;color:#2a2a2a">Qualified</div><div style="left:37.5px;width:300px;text-align:center;top:550.31px;font-size:9px;line-height:10.35px;font-weight:normal;white-space:nowrap;color:#2a2a2a">0</div><div class="c" style="left:41px;top:560.8px;width:99px;height:15.0px;background:#c0c0c0;"></div><div class="c" style="left:140px;top:560.8px;width:95px;height:15.0px;background:#d8dce4;"></div><div style="left:-59.25px;width:300px;text-align:center;top:565.12px;font-size:9.2px;line-height:10.58px;font-weight:normal;white-space:nowrap;color:#2a2a2a">Unqualified</div><div style="left:37.5px;width:300px;text-align:center;top:565.31px;font-size:9px;line-height:10.35px;font-weight:normal;white-space:nowrap;color:#2a2a2a">1</div><div class="c" style="left:41px;top:575.8px;width:99px;height:15.0px;background:#c0c0c0;"></div><div class="c" style="left:140px;top:575.8px;width:95px;height:15.0px;background:#d8dce4;"></div><div style="left:-59.25px;width:300px;text-align:center;top:580.12px;font-size:9.2px;line-height:10.58px;font-weight:normal;white-space:nowrap;color:#2a2a2a">Interested</div><div style="left:37.5px;width:300px;text-align:center;top:580.31px;font-size:9px;line-height:10.35px;font-weight:normal;white-space:nowrap;color:#2a2a2a">0</div><div class="c" style="left:41px;top:590.8px;width:99px;height:15.0px;background:#c0c0c0;"></div><div class="c" style="left:140px;top:590.8px;width:95px;height:15.0px;background:#d8dce4;"></div><div style="left:-59.25px;width:300px;text-align:center;top:595.12px;font-size:9.2px;line-height:10.58px;font-weight:normal;white-space:nowrap;color:#2a2a2a">Not Interested</div><div style="left:37.5px;width:300px;text-align:center;top:595.31px;font-size:9px;line-height:10.35px;font-weight:normal;white-space:nowrap;color:#2a2a2a">0</div><div class="c" style="left:41px;top:605.8px;width:99px;height:15.5px;background:#c0c0c0;"></div><div class="c" style="left:140px;top:605.8px;width:95px;height:15.5px;background:#d8dce4;"></div><div class="" style="left:140px;top:273.5px;width:1px;height:52px;background:#6b6b6b"></div><div class="" style="left:140px;top:351.5px;width:1px;height:270px;background:#6b6b6b"></div><div style="left:245px;width:70px;top:281.61px;height:10.35px;overflow:hidden;font-size:9px;line-height:10.35px;white-space:nowrap;color:#333;display:flex;justify-content:center"><span style="position:static;flex:none">1/1/2024</span></div><div style="left:315px;width:132px;top:281.61px;height:10.35px;overflow:hidden;font-size:9px;line-height:10.35px;white-space:nowrap;color:#333;display:flex;justify-content:center"><span style="position:static;flex:none">Tech Solutions Inc.</span></div><div style="left:447px;width:117.5px;top:281.61px;height:10.35px;overflow:hidden;font-size:9px;line-height:10.35px;white-space:nowrap;color:#333;display:flex;justify-content:center"><span style="position:static;flex:none">Information Technology</span></div><div style="left:564.5px;width:116.5px;top:281.61px;height:10.35px;overflow:hidden;font-size:9px;line-height:10.35px;white-space:nowrap;color:#333;display:flex;justify-content:center"><span style="position:static;flex:none">Sarah Johnson</span></div><div style="left:681px;width:116.5px;top:281.61px;height:10.35px;overflow:hidden;font-size:9px;line-height:10.35px;white-space:nowrap;color:#333;display:flex;justify-content:center"><span style="position:static;flex:none">IT Manager</span></div><div class="chip" style="left:804.7px;top:275.6px;width:93.09999999999991px;height:22.4px;background:#483e50;color:#fff;border-radius:6.5px"><div style="position:absolute;left:0;top:0.3px;width:82.09999999999991px;text-align:center;line-height:11px;font-size:9.1px;white-space:nowrap;-webkit-text-stroke:0.25px #fff;">Sales<br>Prospecting</div></div><svg style="left:887.30px;top:285.00px" width="7" height="4" viewBox="0 0 7 4"><path d="M0 0H6.2L3.1 3.6Z" fill="#fff"/></svg><div class="chip" style="left:911.2px;top:281.0px;width:102.09999999999991px;height:11px;background:#5b2f8e;color:#fff;border-radius:5.5px"><div style="position:absolute;left:0;top:1.1px;width:95.09999999999991px;text-align:center;line-height:10.7px;font-size:9.1px;white-space:nowrap;-webkit-text-stroke:0.25px #fff;">Strategic</div></div><svg style="left:1002.80px;top:284.70px" width="7" height="4" viewBox="0 0 7 4"><path d="M0 0H6.2L3.1 3.6Z" fill="#fff"/></svg><div style="left:1019.5px;width:70.5px;top:281.61px;height:10.35px;overflow:hidden;font-size:9px;line-height:10.35px;white-space:nowrap;color:#333;display:flex;justify-content:center"><span style="position:static;flex:none">$100,000.00</span></div><div style="left:1090px;width:82px;top:281.61px;height:10.35px;overflow:hidden;font-size:9px;line-height:10.35px;white-space:nowrap;color:#333;display:flex;justify-content:center"><span style="position:static;flex:none">50.00%</span></div><div style="left:1172px;width:74.5px;top:281.61px;height:10.35px;overflow:hidden;font-size:9px;line-height:10.35px;white-space:nowrap;color:#333;display:flex;justify-content:center"><span style="position:static;flex:none">$50,000.00</span></div><div style="left:1246.5px;width:164.0px;top:281.61px;height:10.35px;overflow:hidden;font-size:9px;line-height:10.35px;white-space:nowrap;color:#333;display:flex;justify-content:center"><span style="position:static;flex:none">123 Tech Street</span></div><div style="left:1410.5px;width:70.0px;top:281.61px;height:10.35px;overflow:hidden;font-size:9px;line-height:10.35px;white-space:nowrap;color:#333;display:flex;justify-content:center"><span style="position:static;flex:none">Techville</span></div><div style="left:1480.5px;width:70.5px;top:281.61px;height:10.35px;overflow:hidden;font-size:9px;line-height:10.35px;white-space:nowrap;color:#333;display:flex;justify-content:center"><span style="position:static;flex:none">TX</span></div><div style="left:245px;width:70px;top:307.61px;height:10.35px;overflow:hidden;font-size:9px;line-height:10.35px;white-space:nowrap;color:#333;display:flex;justify-content:center"><span style="position:static;flex:none">1/1/2024</span></div><div style="left:315px;width:132px;top:307.61px;height:10.35px;overflow:hidden;font-size:9px;line-height:10.35px;white-space:nowrap;color:#333;display:flex;justify-content:center"><span style="position:static;flex:none">Eco-Friendly Supplies Co.</span></div><div style="left:447px;width:117.5px;top:307.61px;height:10.35px;overflow:hidden;font-size:9px;line-height:10.35px;white-space:nowrap;color:#333;display:flex;justify-content:center"><span style="position:static;flex:none">Environmental Products</span></div><div style="left:564.5px;width:116.5px;top:307.61px;height:10.35px;overflow:hidden;font-size:9px;line-height:10.35px;white-space:nowrap;color:#333;display:flex;justify-content:center"><span style="position:static;flex:none">Mark Greenfield</span></div><div style="left:681px;width:116.5px;top:307.61px;height:10.35px;overflow:hidden;font-size:9px;line-height:10.35px;white-space:nowrap;color:#333;display:flex;justify-content:center"><span style="position:static;flex:none">Procurement Manager</span></div><div class="chip" style="left:804.7px;top:301.6px;width:93.09999999999991px;height:22.4px;background:#6a1b9a;color:#fff;border-radius:6.5px"><div style="position:absolute;left:0;top:0.3px;width:82.09999999999991px;text-align:center;line-height:11px;font-size:9.1px;white-space:nowrap;-webkit-text-stroke:0.25px #fff;">Outbound<br>Marketing</div></div><svg style="left:887.30px;top:311.00px" width="7" height="4" viewBox="0 0 7 4"><path d="M0 0H6.2L3.1 3.6Z" fill="#fff"/></svg><div class="chip" style="left:911.2px;top:307.0px;width:102.09999999999991px;height:11px;background:#5b2f8e;color:#fff;border-radius:5.5px"><div style="position:absolute;left:0;top:1.1px;width:95.09999999999991px;text-align:center;line-height:10.7px;font-size:9.1px;white-space:nowrap;-webkit-text-stroke:0.25px #fff;">Strategic</div></div><svg style="left:1002.80px;top:310.70px" width="7" height="4" viewBox="0 0 7 4"><path d="M0 0H6.2L3.1 3.6Z" fill="#fff"/></svg><div style="left:1019.5px;width:70.5px;top:307.61px;height:10.35px;overflow:hidden;font-size:9px;line-height:10.35px;white-space:nowrap;color:#333;display:flex;justify-content:center"><span style="position:static;flex:none">$200,000.00</span></div><div style="left:1090px;width:82px;top:307.61px;height:10.35px;overflow:hidden;font-size:9px;line-height:10.35px;white-space:nowrap;color:#333;display:flex;justify-content:center"><span style="position:static;flex:none">90.00%</span></div><div style="left:1172px;width:74.5px;top:307.61px;height:10.35px;overflow:hidden;font-size:9px;line-height:10.35px;white-space:nowrap;color:#333;display:flex;justify-content:center"><span style="position:static;flex:none">$180,000.00</span></div><div style="left:1246.5px;width:164.0px;top:307.61px;height:10.35px;overflow:hidden;font-size:9px;line-height:10.35px;white-space:nowrap;color:#333;display:flex;justify-content:center"><span style="position:static;flex:none">456 Green Street</span></div><div style="left:1410.5px;width:70.0px;top:307.61px;height:10.35px;overflow:hidden;font-size:9px;line-height:10.35px;white-space:nowrap;color:#333;display:flex;justify-content:center"><span style="position:static;flex:none">Greencity</span></div><div style="left:1480.5px;width:70.5px;top:307.61px;height:10.35px;overflow:hidden;font-size:9px;line-height:10.35px;white-space:nowrap;color:#333;display:flex;justify-content:center"><span style="position:static;flex:none">CA</span></div><div style="left:245px;width:70px;top:333.61px;height:10.35px;overflow:hidden;font-size:9px;line-height:10.35px;white-space:nowrap;color:#333;display:flex;justify-content:center"><span style="position:static;flex:none">1/1/2024</span></div><div style="left:315px;width:132px;top:333.61px;height:10.35px;overflow:hidden;font-size:9px;line-height:10.35px;white-space:nowrap;color:#333;display:flex;justify-content:center"><span style="position:static;flex:none">Global Finance Solutions Ltd.</span></div><div style="left:447px;width:117.5px;top:333.61px;height:10.35px;overflow:hidden;font-size:9px;line-height:10.35px;white-space:nowrap;color:#333;display:flex;justify-content:center"><span style="position:static;flex:none">Financial Services</span></div><div style="left:564.5px;width:116.5px;top:333.61px;height:10.35px;overflow:hidden;font-size:9px;line-height:10.35px;white-space:nowrap;color:#333;display:flex;justify-content:center"><span style="position:static;flex:none">Robert Turner</span></div><div style="left:681px;width:116.5px;top:333.61px;height:10.35px;overflow:hidden;font-size:9px;line-height:10.35px;white-space:nowrap;color:#333;display:flex;justify-content:center"><span style="position:static;flex:none">CFO</span></div><div class="chip" style="left:804.7px;top:327.6px;width:93.09999999999991px;height:22.4px;background:#0347f5;color:#fff;border-radius:6.5px"><div style="position:absolute;left:0;top:0.3px;width:82.09999999999991px;text-align:center;line-height:11px;font-size:9.1px;white-space:nowrap;-webkit-text-stroke:0.25px #fff;">Inbound<br>Marketing</div></div><svg style="left:887.30px;top:337.00px" width="7" height="4" viewBox="0 0 7 4"><path d="M0 0H6.2L3.1 3.6Z" fill="#fff"/></svg><div class="chip" style="left:911.2px;top:333.0px;width:102.09999999999991px;height:11px;background:#e7d2f3;color:#5f4b7a;border-radius:5.5px"><div style="position:absolute;left:0;top:1.1px;width:95.09999999999991px;text-align:center;line-height:10.7px;font-size:9.1px;white-space:nowrap;">Tactical</div></div><svg style="left:1002.80px;top:336.70px" width="7" height="4" viewBox="0 0 7 4"><path d="M0 0H6.2L3.1 3.6Z" fill="#5b3a8e"/></svg><div style="left:1019.5px;width:70.5px;top:333.61px;height:10.35px;overflow:hidden;font-size:9px;line-height:10.35px;white-space:nowrap;color:#333;display:flex;justify-content:center"><span style="position:static;flex:none">$50,000.00</span></div><div style="left:1090px;width:82px;top:333.61px;height:10.35px;overflow:hidden;font-size:9px;line-height:10.35px;white-space:nowrap;color:#333;display:flex;justify-content:center"><span style="position:static;flex:none">80.00%</span></div><div style="left:1172px;width:74.5px;top:333.61px;height:10.35px;overflow:hidden;font-size:9px;line-height:10.35px;white-space:nowrap;color:#333;display:flex;justify-content:center"><span style="position:static;flex:none">$40,000.00</span></div><div style="left:1246.5px;width:164.0px;top:333.61px;height:10.35px;overflow:hidden;font-size:9px;line-height:10.35px;white-space:nowrap;color:#333;display:flex;justify-content:center"><span style="position:static;flex:none">789 Finance Avenue</span></div><div style="left:1410.5px;width:70.0px;top:333.61px;height:10.35px;overflow:hidden;font-size:9px;line-height:10.35px;white-space:nowrap;color:#333;display:flex;justify-content:center"><span style="position:static;flex:none">Moneytown</span></div><div style="left:1480.5px;width:70.5px;top:333.61px;height:10.35px;overflow:hidden;font-size:9px;line-height:10.35px;white-space:nowrap;color:#333;display:flex;justify-content:center"><span style="position:static;flex:none">NY</span></div><div style="left:245px;width:70px;top:354.81px;height:10.35px;overflow:hidden;font-size:9px;line-height:10.35px;white-space:nowrap;color:#333;display:flex;justify-content:center"><span style="position:static;flex:none">1/1/2024</span></div><div style="left:315px;width:132px;top:354.81px;height:10.35px;overflow:hidden;font-size:9px;line-height:10.35px;white-space:nowrap;color:#333;display:flex;justify-content:center"><span style="position:static;flex:none">HealthCare Innovations LLC</span></div><div style="left:447px;width:117.5px;top:354.81px;height:10.35px;overflow:hidden;font-size:9px;line-height:10.35px;white-space:nowrap;color:#333;display:flex;justify-content:center"><span style="position:static;flex:none">Healthcare Technology</span></div><div style="left:564.5px;width:116.5px;top:354.81px;height:10.35px;overflow:hidden;font-size:9px;line-height:10.35px;white-space:nowrap;color:#333;display:flex;justify-content:center"><span style="position:static;flex:none">Dr. Emily Rodriguez</span></div><div style="left:681px;width:116.5px;top:354.81px;height:10.35px;overflow:hidden;font-size:9px;line-height:10.35px;white-space:nowrap;color:#333;display:flex;justify-content:center"><span style="position:static;flex:none">Chief Medical Officer</span></div><div class="chip" style="left:804.7px;top:353.5px;width:93.09999999999991px;height:11px;background:#4a8fc7;color:#fff;border-radius:5.5px"><div style="position:absolute;left:0;top:1.1px;width:86.09999999999991px;text-align:center;line-height:10.7px;font-size:9.1px;white-space:nowrap;-webkit-text-stroke:0.25px #fff;">Networking</div></div><svg style="left:887.30px;top:357.20px" width="7" height="4" viewBox="0 0 7 4"><path d="M0 0H6.2L3.1 3.6Z" fill="#fff"/></svg><div class="chip" style="left:911.2px;top:353.5px;width:102.09999999999991px;height:11px;background:#c9d9e3;color:#4a4a4a;border-radius:5.5px"><div style="position:absolute;left:0;top:1.1px;width:95.09999999999991px;text-align:center;line-height:10.7px;font-size:9.1px;white-space:nowrap;">Enterprise</div></div><svg style="left:1002.80px;top:357.20px" width="7" height="4" viewBox="0 0 7 4"><path d="M0 0H6.2L3.1 3.6Z" fill="#333"/></svg><div style="left:1019.5px;width:70.5px;top:354.81px;height:10.35px;overflow:hidden;font-size:9px;line-height:10.35px;white-space:nowrap;color:#333;display:flex;justify-content:center"><span style="position:static;flex:none">$200,000.00</span></div><div style="left:1090px;width:82px;top:354.81px;height:10.35px;overflow:hidden;font-size:9px;line-height:10.35px;white-space:nowrap;color:#333;display:flex;justify-content:center"><span style="position:static;flex:none">50.00%</span></div><div style="left:1172px;width:74.5px;top:354.81px;height:10.35px;overflow:hidden;font-size:9px;line-height:10.35px;white-space:nowrap;color:#333;display:flex;justify-content:center"><span style="position:static;flex:none">$100,000.00</span></div><div style="left:1246.5px;width:164.0px;top:354.81px;height:10.35px;overflow:hidden;font-size:9px;line-height:10.35px;white-space:nowrap;color:#333;display:flex;justify-content:center"><span style="position:static;flex:none">567 MedTech Drive</span></div><div style="left:1410.5px;width:70.0px;top:354.81px;height:10.35px;overflow:hidden;font-size:9px;line-height:10.35px;white-space:nowrap;color:#333;display:flex;justify-content:center"><span style="position:static;flex:none">Healthville</span></div><div style="left:1480.5px;width:70.5px;top:354.81px;height:10.35px;overflow:hidden;font-size:9px;line-height:10.35px;white-space:nowrap;color:#333;display:flex;justify-content:center"><span style="position:static;flex:none">FL</span></div><div style="left:245px;width:70px;top:374.61px;height:10.35px;overflow:hidden;font-size:9px;line-height:10.35px;white-space:nowrap;color:#333;display:flex;justify-content:center"><span style="position:static;flex:none">1/2/2024</span></div><div style="left:315px;width:132px;top:374.61px;height:10.35px;overflow:hidden;font-size:9px;line-height:10.35px;white-space:nowrap;color:#333;display:flex;justify-content:center"><span style="position:static;flex:none">Manufacturing Dynamics Corp.</span></div><div style="left:447px;width:117.5px;top:374.61px;height:10.35px;overflow:hidden;font-size:9px;line-height:10.35px;white-space:nowrap;color:#333;display:flex;justify-content:center"><span style="position:static;flex:none">Industrial Manufacturing</span></div><div style="left:564.5px;width:116.5px;top:374.61px;height:10.35px;overflow:hidden;font-size:9px;line-height:10.35px;white-space:nowrap;color:#333;display:flex;justify-content:center"><span style="position:static;flex:none">James Patterson</span></div><div style="left:681px;width:116.5px;top:374.61px;height:10.35px;overflow:hidden;font-size:9px;line-height:10.35px;white-space:nowrap;color:#333;display:flex;justify-content:center"><span style="position:static;flex:none">Operations Manager</span></div><div class="chip" style="left:804.7px;top:374.0px;width:93.09999999999991px;height:11px;background:#c6e2f6;color:#3e5f8a;border-radius:5.5px"><div style="position:absolute;left:0;top:1.1px;width:86.09999999999991px;text-align:center;line-height:10.7px;font-size:9.1px;white-space:nowrap;">Workshops</div></div><svg style="left:887.30px;top:377.70px" width="7" height="4" viewBox="0 0 7 4"><path d="M0 0H6.2L3.1 3.6Z" fill="#1f3f70"/></svg><div class="chip" style="left:911.2px;top:368.6px;width:102.09999999999991px;height:22.4px;background:#0b4ea2;color:#fff;border-radius:6.5px"><div style="position:absolute;left:0;top:0.3px;width:91.09999999999991px;text-align:center;line-height:11px;font-size:9.1px;white-space:nowrap;-webkit-text-stroke:0.25px #fff;">Sales Qualified<br>Leads (SQLs)</div></div><svg style="left:1002.80px;top:378.00px" width="7" height="4" viewBox="0 0 7 4"><path d="M0 0H6.2L3.1 3.6Z" fill="#fff"/></svg><div style="left:1019.5px;width:70.5px;top:374.61px;height:10.35px;overflow:hidden;font-size:9px;line-height:10.35px;white-space:nowrap;color:#333;display:flex;justify-content:center"><span style="position:static;flex:none">$150,000.00</span></div><div style="left:1090px;width:82px;top:374.61px;height:10.35px;overflow:hidden;font-size:9px;line-height:10.35px;white-space:nowrap;color:#333;display:flex;justify-content:center"><span style="position:static;flex:none">90.00%</span></div><div style="left:1172px;width:74.5px;top:374.61px;height:10.35px;overflow:hidden;font-size:9px;line-height:10.35px;white-space:nowrap;color:#333;display:flex;justify-content:center"><span style="position:static;flex:none">$135,000.00</span></div><div style="left:1246.5px;width:164.0px;top:374.61px;height:10.35px;overflow:hidden;font-size:9px;line-height:10.35px;white-space:nowrap;color:#333;display:flex;justify-content:center"><span style="position:static;flex:none">876 Factory Lane</span></div><div style="left:1410.5px;width:70.0px;top:374.61px;height:10.35px;overflow:hidden;font-size:9px;line-height:10.35px;white-space:nowrap;color:#333;display:flex;justify-content:center"><span style="position:static;flex:none">Manufacturertown</span></div><div style="left:1480.5px;width:70.5px;top:374.61px;height:10.35px;overflow:hidden;font-size:9px;line-height:10.35px;white-space:nowrap;color:#333;display:flex;justify-content:center"><span style="position:static;flex:none">OH</span></div><div style="left:245px;width:70px;top:400.61px;height:10.35px;overflow:hidden;font-size:9px;line-height:10.35px;white-space:nowrap;color:#333;display:flex;justify-content:center"><span style="position:static;flex:none">1/2/2024</span></div><div style="left:315px;width:132px;top:400.61px;height:10.35px;overflow:hidden;font-size:9px;line-height:10.35px;white-space:nowrap;color:#333;display:flex;justify-content:center"><span style="position:static;flex:none">Creative Marketing Solutions Ltd.</span></div><div style="left:447px;width:117.5px;top:400.61px;height:10.35px;overflow:hidden;font-size:9px;line-height:10.35px;white-space:nowrap;color:#333;display:flex;justify-content:center"><span style="position:static;flex:none">Marketing Services</span></div><div style="left:564.5px;width:116.5px;top:400.61px;height:10.35px;overflow:hidden;font-size:9px;line-height:10.35px;white-space:nowrap;color:#333;display:flex;justify-content:center"><span style="position:static;flex:none">Olivia Adams</span></div><div style="left:681px;width:116.5px;top:400.61px;height:10.35px;overflow:hidden;font-size:9px;line-height:10.35px;white-space:nowrap;color:#333;display:flex;justify-content:center"><span style="position:static;flex:none">Marketing Director</span></div><div class="chip" style="left:804.7px;top:400.0px;width:93.09999999999991px;height:11px;background:#4a8fc7;color:#fff;border-radius:5.5px"><div style="position:absolute;left:0;top:1.1px;width:86.09999999999991px;text-align:center;line-height:10.7px;font-size:9.1px;white-space:nowrap;-webkit-text-stroke:0.25px #fff;">Networking</div></div><svg style="left:887.30px;top:403.70px" width="7" height="4" viewBox="0 0 7 4"><path d="M0 0H6.2L3.1 3.6Z" fill="#fff"/></svg><div class="chip" style="left:911.2px;top:394.6px;width:102.09999999999991px;height:22.4px;background:#0b4ea2;color:#fff;border-radius:6.5px"><div style="position:absolute;left:0;top:0.3px;width:91.09999999999991px;text-align:center;line-height:11px;font-size:9.1px;white-space:nowrap;-webkit-text-stroke:0.25px #fff;">Sales Qualified<br>Leads (SQLs)</div></div><svg style="left:1002.80px;top:404.00px" width="7" height="4" viewBox="0 0 7 4"><path d="M0 0H6.2L3.1 3.6Z" fill="#fff"/></svg><div style="left:1019.5px;width:70.5px;top:400.61px;height:10.35px;overflow:hidden;font-size:9px;line-height:10.35px;white-space:nowrap;color:#333;display:flex;justify-content:center"><span style="position:static;flex:none">$250,000.00</span></div><div style="left:1090px;width:82px;top:400.61px;height:10.35px;overflow:hidden;font-size:9px;line-height:10.35px;white-space:nowrap;color:#333;display:flex;justify-content:center"><span style="position:static;flex:none">95.00%</span></div><div style="left:1172px;width:74.5px;top:400.61px;height:10.35px;overflow:hidden;font-size:9px;line-height:10.35px;white-space:nowrap;color:#333;display:flex;justify-content:center"><span style="position:static;flex:none">$237,500.00</span></div><div style="left:1246.5px;width:164.0px;top:400.61px;height:10.35px;overflow:hidden;font-size:9px;line-height:10.35px;white-space:nowrap;color:#333;display:flex;justify-content:center"><span style="position:static;flex:none">345 Creative Street</span></div><div style="left:1410.5px;width:70.0px;top:400.61px;height:10.35px;overflow:hidden;font-size:9px;line-height:10.35px;white-space:nowrap;color:#333;display:flex;justify-content:center"><span style="position:static;flex:none">Advertville</span></div><div style="left:1480.5px;width:70.5px;top:400.61px;height:10.35px;overflow:hidden;font-size:9px;line-height:10.35px;white-space:nowrap;color:#333;display:flex;justify-content:center"><span style="position:static;flex:none">IL</span></div><div style="left:245px;width:70px;top:426.61px;height:10.35px;overflow:hidden;font-size:9px;line-height:10.35px;white-space:nowrap;color:#333;display:flex;justify-content:center"><span style="position:static;flex:none">1/5/2024</span></div><div style="left:315px;width:132px;top:426.61px;height:10.35px;overflow:hidden;font-size:9px;line-height:10.35px;white-space:nowrap;color:#333;display:flex;justify-content:center"><span style="position:static;flex:none">Energy Solutions International</span></div><div style="left:447px;width:117.5px;top:426.61px;height:10.35px;overflow:hidden;font-size:9px;line-height:10.35px;white-space:nowrap;color:#333;display:flex;justify-content:center"><span style="position:static;flex:none">Renewable Energy</span></div><div style="left:564.5px;width:116.5px;top:426.61px;height:10.35px;overflow:hidden;font-size:9px;line-height:10.35px;white-space:nowrap;color:#333;display:flex;justify-content:center"><span style="position:static;flex:none">Alex Ramirez</span></div><div style="left:681px;width:116.5px;top:426.61px;height:10.35px;overflow:hidden;font-size:9px;line-height:10.35px;white-space:nowrap;color:#333;display:flex;justify-content:center"><span style="position:static;flex:none">CEO</span></div><div class="chip" style="left:804.7px;top:420.6px;width:93.09999999999991px;height:22.4px;background:#0b4ea2;color:#fff;border-radius:6.5px"><div style="position:absolute;left:0;top:0.3px;width:82.09999999999991px;text-align:center;line-height:11px;font-size:9.1px;white-space:nowrap;-webkit-text-stroke:0.25px #fff;">Online<br>Advertising</div></div><svg style="left:887.30px;top:430.00px" width="7" height="4" viewBox="0 0 7 4"><path d="M0 0H6.2L3.1 3.6Z" fill="#fff"/></svg><div class="chip" style="left:911.2px;top:426.0px;width:102.09999999999991px;height:11px;background:#bfe0f6;color:#2f5a9a;border-radius:5.5px"><div style="position:absolute;left:0;top:1.1px;width:95.09999999999991px;text-align:center;line-height:10.7px;font-size:9.1px;white-space:nowrap;">Reactivation</div></div><svg style="left:1002.80px;top:429.70px" width="7" height="4" viewBox="0 0 7 4"><path d="M0 0H6.2L3.1 3.6Z" fill="#2f5a9a"/></svg><div style="left:1019.5px;width:70.5px;top:426.61px;height:10.35px;overflow:hidden;font-size:9px;line-height:10.35px;white-space:nowrap;color:#333;display:flex;justify-content:center"><span style="position:static;flex:none">$10,000.00</span></div><div style="left:1090px;width:82px;top:426.61px;height:10.35px;overflow:hidden;font-size:9px;line-height:10.35px;white-space:nowrap;color:#333;display:flex;justify-content:center"><span style="position:static;flex:none">100.00%</span></div><div style="left:1172px;width:74.5px;top:426.61px;height:10.35px;overflow:hidden;font-size:9px;line-height:10.35px;white-space:nowrap;color:#333;display:flex;justify-content:center"><span style="position:static;flex:none">$10,000.00</span></div><div style="left:1246.5px;width:164.0px;top:426.61px;height:10.35px;overflow:hidden;font-size:9px;line-height:10.35px;white-space:nowrap;color:#333;display:flex;justify-content:center"><span style="position:static;flex:none">234 Renewables Avenue</span></div><div style="left:1410.5px;width:70.0px;top:426.61px;height:10.35px;overflow:hidden;font-size:9px;line-height:10.35px;white-space:nowrap;color:#333;display:flex;justify-content:center"><span style="position:static;flex:none">Greentech City</span></div><div style="left:1480.5px;width:70.5px;top:426.61px;height:10.35px;overflow:hidden;font-size:9px;line-height:10.35px;white-space:nowrap;color:#333;display:flex;justify-content:center"><span style="position:static;flex:none">WA</span></div><div style="left:245px;width:70px;top:452.76px;height:10.35px;overflow:hidden;font-size:9px;line-height:10.35px;white-space:nowrap;color:#333;display:flex;justify-content:center"><span style="position:static;flex:none">1/5/2024</span></div><div style="left:315px;width:132px;top:452.76px;height:10.35px;overflow:hidden;font-size:9px;line-height:10.35px;white-space:nowrap;color:#333;display:flex;justify-content:center"><span style="position:static;flex:none">Logistics Plus Inc.</span></div><div style="left:447px;width:117.5px;top:452.76px;height:10.35px;overflow:hidden;font-size:9px;line-height:10.35px;white-space:nowrap;color:#333;display:flex;justify-content:center"><span style="position:static;flex:none">Logistics and Supply Chain</span></div><div style="left:564.5px;width:116.5px;top:452.76px;height:10.35px;overflow:hidden;font-size:9px;line-height:10.35px;white-space:nowrap;color:#333;display:flex;justify-content:center"><span style="position:static;flex:none">Mike Thompson</span></div><div style="left:681px;width:116.5px;top:452.76px;height:10.35px;overflow:hidden;font-size:9px;line-height:10.35px;white-space:nowrap;color:#333;display:flex;justify-content:center"><span style="position:static;flex:none">Supply Chain Manager</span></div><div class="chip" style="left:804.7px;top:446.6px;width:93.09999999999991px;height:22.70000000000001px;background:#0b4ea2;color:#fff;border-radius:6.5px"><div style="position:absolute;left:0;top:0.3px;width:82.09999999999991px;text-align:center;line-height:11px;font-size:9.1px;white-space:nowrap;-webkit-text-stroke:0.25px #fff;">Online<br>Advertising</div></div><svg style="left:887.30px;top:456.15px" width="7" height="4" viewBox="0 0 7 4"><path d="M0 0H6.2L3.1 3.6Z" fill="#fff"/></svg><div class="chip" style="left:911.2px;top:446.6px;width:102.09999999999991px;height:22.70000000000001px;background:#80e0d9;color:#222;border-radius:6.5px"><div style="position:absolute;left:0;top:0.3px;width:91.09999999999991px;text-align:center;line-height:11px;font-size:9.1px;white-space:nowrap;">Competitor<br>Conversion</div></div><svg style="left:1002.80px;top:456.15px" width="7" height="4" viewBox="0 0 7 4"><path d="M0 0H6.2L3.1 3.6Z" fill="#111"/></svg><div style="left:1019.5px;width:70.5px;top:452.76px;height:10.35px;overflow:hidden;font-size:9px;line-height:10.35px;white-space:nowrap;color:#333;display:flex;justify-content:center"><span style="position:static;flex:none">$90,000.00</span></div><div style="left:1090px;width:82px;top:452.76px;height:10.35px;overflow:hidden;font-size:9px;line-height:10.35px;white-space:nowrap;color:#333;display:flex;justify-content:center"><span style="position:static;flex:none">75.00%</span></div><div style="left:1172px;width:74.5px;top:452.76px;height:10.35px;overflow:hidden;font-size:9px;line-height:10.35px;white-space:nowrap;color:#333;display:flex;justify-content:center"><span style="position:static;flex:none">$67,500.00</span></div><div style="left:1246.5px;width:164.0px;top:452.76px;height:10.35px;overflow:hidden;font-size:9px;line-height:10.35px;white-space:nowrap;color:#333;display:flex;justify-content:center"><span style="position:static;flex:none">789 Logistics Road</span></div><div style="left:1410.5px;width:70.0px;top:452.76px;height:10.35px;overflow:hidden;font-size:9px;line-height:10.35px;white-space:nowrap;color:#333;display:flex;justify-content:center"><span style="position:static;flex:none">Supplytown</span></div><div style="left:1480.5px;width:70.5px;top:452.76px;height:10.35px;overflow:hidden;font-size:9px;line-height:10.35px;white-space:nowrap;color:#333;display:flex;justify-content:center"><span style="position:static;flex:none">TX</span></div><div style="left:245px;width:70px;top:474.06px;height:10.35px;overflow:hidden;font-size:9px;line-height:10.35px;white-space:nowrap;color:#333;display:flex;justify-content:center"><span style="position:static;flex:none">7/6/2025</span></div><div style="left:315px;width:132px;top:474.06px;height:10.35px;overflow:hidden;font-size:9px;line-height:10.35px;white-space:nowrap;color:#333;display:flex;justify-content:center"><span style="position:static;flex:none">Brennen</span></div><div style="left:447px;width:117.5px;top:474.06px;height:10.35px;overflow:hidden;font-size:9px;line-height:10.35px;white-space:nowrap;color:#333;display:flex;justify-content:center"><span style="position:static;flex:none">Digital Marketing</span></div><div style="left:564.5px;width:116.5px;top:474.06px;height:10.35px;overflow:hidden;font-size:9px;line-height:10.35px;white-space:nowrap;color:#333;display:flex;justify-content:center"><span style="position:static;flex:none">Jennifer Stell</span></div><div style="left:681px;width:116.5px;top:474.06px;height:10.35px;overflow:hidden;font-size:9px;line-height:10.35px;white-space:nowrap;color:#333;display:flex;justify-content:center"><span style="position:static;flex:none">Marketing Director</span></div><div class="chip" style="left:804.7px;top:472.75px;width:93.09999999999991px;height:11px;background:#4a8fc7;color:#fff;border-radius:5.5px"><div style="position:absolute;left:0;top:1.1px;width:86.09999999999991px;text-align:center;line-height:10.7px;font-size:9.1px;white-space:nowrap;-webkit-text-stroke:0.25px #fff;">Networking</div></div><svg style="left:887.30px;top:476.45px" width="7" height="4" viewBox="0 0 7 4"><path d="M0 0H6.2L3.1 3.6Z" fill="#fff"/></svg><div class="chip" style="left:911.2px;top:472.75px;width:102.09999999999991px;height:11px;background:#e7d2f3;color:#5f4b7a;border-radius:5.5px"><div style="position:absolute;left:0;top:1.1px;width:95.09999999999991px;text-align:center;line-height:10.7px;font-size:9.1px;white-space:nowrap;">Tactical</div></div><svg style="left:1002.80px;top:476.45px" width="7" height="4" viewBox="0 0 7 4"><path d="M0 0H6.2L3.1 3.6Z" fill="#5b3a8e"/></svg><div style="left:1019.5px;width:70.5px;top:474.06px;height:10.35px;overflow:hidden;font-size:9px;line-height:10.35px;white-space:nowrap;color:#333;display:flex;justify-content:center"><span style="position:static;flex:none">$100,000.00</span></div><div style="left:1090px;width:82px;top:474.06px;height:10.35px;overflow:hidden;font-size:9px;line-height:10.35px;white-space:nowrap;color:#333;display:flex;justify-content:center"><span style="position:static;flex:none">20.00%</span></div><div style="left:1172px;width:74.5px;top:474.06px;height:10.35px;overflow:hidden;font-size:9px;line-height:10.35px;white-space:nowrap;color:#333;display:flex;justify-content:center"><span style="position:static;flex:none">$20,000.00</span></div><div style="left:1246.5px;width:164.0px;top:474.06px;height:10.35px;overflow:hidden;font-size:9px;line-height:10.35px;white-space:nowrap;color:#333;display:flex;justify-content:center"><span style="position:static;flex:none">799 Green Street</span></div><div style="left:1410.5px;width:70.0px;top:474.06px;height:10.35px;overflow:hidden;font-size:9px;line-height:10.35px;white-space:nowrap;color:#333;display:flex;justify-content:center"><span style="position:static;flex:none">Greencity</span></div><div style="left:1480.5px;width:70.5px;top:474.06px;height:10.35px;overflow:hidden;font-size:9px;line-height:10.35px;white-space:nowrap;color:#333;display:flex;justify-content:center"><span style="position:static;flex:none">CA</span></div><div class="chip" style="left:804.7px;top:487.7px;width:93.09999999999991px;height:11px;background:#e6e8eb;color:#222;border-radius:5.5px"><div style="position:absolute;left:0;top:1.1px;width:86.09999999999991px;text-align:center;line-height:10.7px;font-size:9.1px;white-space:nowrap;"></div></div><svg style="left:887.30px;top:491.40px" width="7" height="4" viewBox="0 0 7 4"><path d="M0 0H6.2L3.1 3.6Z" fill="#1a1a1a"/></svg><div class="chip" style="left:911.2px;top:487.7px;width:102.09999999999991px;height:11px;background:#e6e8eb;color:#222;border-radius:5.5px"><div style="position:absolute;left:0;top:1.1px;width:95.09999999999991px;text-align:center;line-height:10.7px;font-size:9.1px;white-space:nowrap;"></div></div><svg style="left:1002.80px;top:491.40px" width="7" height="4" viewBox="0 0 7 4"><path d="M0 0H6.2L3.1 3.6Z" fill="#1a1a1a"/></svg><div class="chip" style="left:804.7px;top:502.70000000000005px;width:93.09999999999991px;height:11px;background:#e6e8eb;color:#222;border-radius:5.5px"><div style="position:absolute;left:0;top:1.1px;width:86.09999999999991px;text-align:center;line-height:10.7px;font-size:9.1px;white-space:nowrap;"></div></div><svg style="left:887.30px;top:506.40px" width="7" height="4" viewBox="0 0 7 4"><path d="M0 0H6.2L3.1 3.6Z" fill="#1a1a1a"/></svg><div class="chip" style="left:911.2px;top:502.70000000000005px;width:102.09999999999991px;height:11px;background:#e6e8eb;color:#222;border-radius:5.5px"><div style="position:absolute;left:0;top:1.1px;width:95.09999999999991px;text-align:center;line-height:10.7px;font-size:9.1px;white-space:nowrap;"></div></div><svg style="left:1002.80px;top:506.40px" width="7" height="4" viewBox="0 0 7 4"><path d="M0 0H6.2L3.1 3.6Z" fill="#1a1a1a"/></svg><div class="chip" style="left:804.7px;top:517.75px;width:93.09999999999991px;height:11px;background:#e6e8eb;color:#222;border-radius:5.5px"><div style="position:absolute;left:0;top:1.1px;width:86.09999999999991px;text-align:center;line-height:10.7px;font-size:9.1px;white-space:nowrap;"></div></div><svg style="left:887.30px;top:521.45px" width="7" height="4" viewBox="0 0 7 4"><path d="M0 0H6.2L3.1 3.6Z" fill="#1a1a1a"/></svg><div class="chip" style="left:911.2px;top:517.75px;width:102.09999999999991px;height:11px;background:#e6e8eb;color:#222;border-radius:5.5px"><div style="position:absolute;left:0;top:1.1px;width:95.09999999999991px;text-align:center;line-height:10.7px;font-size:9.1px;white-space:nowrap;"></div></div><svg style="left:1002.80px;top:521.45px" width="7" height="4" viewBox="0 0 7 4"><path d="M0 0H6.2L3.1 3.6Z" fill="#1a1a1a"/></svg><div class="chip" style="left:804.7px;top:532.8px;width:93.09999999999991px;height:11px;background:#e6e8eb;color:#222;border-radius:5.5px"><div style="position:absolute;left:0;top:1.1px;width:86.09999999999991px;text-align:center;line-height:10.7px;font-size:9.1px;white-space:nowrap;"></div></div><svg style="left:887.30px;top:536.50px" width="7" height="4" viewBox="0 0 7 4"><path d="M0 0H6.2L3.1 3.6Z" fill="#1a1a1a"/></svg><div class="chip" style="left:911.2px;top:532.8px;width:102.09999999999991px;height:11px;background:#e6e8eb;color:#222;border-radius:5.5px"><div style="position:absolute;left:0;top:1.1px;width:95.09999999999991px;text-align:center;line-height:10.7px;font-size:9.1px;white-space:nowrap;"></div></div><svg style="left:1002.80px;top:536.50px" width="7" height="4" viewBox="0 0 7 4"><path d="M0 0H6.2L3.1 3.6Z" fill="#1a1a1a"/></svg><div class="chip" style="left:804.7px;top:547.8px;width:93.09999999999991px;height:11px;background:#e6e8eb;color:#222;border-radius:5.5px"><div style="position:absolute;left:0;top:1.1px;width:86.09999999999991px;text-align:center;line-height:10.7px;font-size:9.1px;white-space:nowrap;"></div></div><svg style="left:887.30px;top:551.50px" width="7" height="4" viewBox="0 0 7 4"><path d="M0 0H6.2L3.1 3.6Z" fill="#1a1a1a"/></svg><div class="chip" style="left:911.2px;top:547.8px;width:102.09999999999991px;height:11px;background:#e6e8eb;color:#222;border-radius:5.5px"><div style="position:absolute;left:0;top:1.1px;width:95.09999999999991px;text-align:center;line-height:10.7px;font-size:9.1px;white-space:nowrap;"></div></div><svg style="left:1002.80px;top:551.50px" width="7" height="4" viewBox="0 0 7 4"><path d="M0 0H6.2L3.1 3.6Z" fill="#1a1a1a"/></svg><div class="chip" style="left:804.7px;top:562.8px;width:93.09999999999991px;height:11px;background:#e6e8eb;color:#222;border-radius:5.5px"><div style="position:absolute;left:0;top:1.1px;width:86.09999999999991px;text-align:center;line-height:10.7px;font-size:9.1px;white-space:nowrap;"></div></div><svg style="left:887.30px;top:566.50px" width="7" height="4" viewBox="0 0 7 4"><path d="M0 0H6.2L3.1 3.6Z" fill="#1a1a1a"/></svg><div class="chip" style="left:911.2px;top:562.8px;width:102.09999999999991px;height:11px;background:#e6e8eb;color:#222;border-radius:5.5px"><div style="position:absolute;left:0;top:1.1px;width:95.09999999999991px;text-align:center;line-height:10.7px;font-size:9.1px;white-space:nowrap;"></div></div><svg style="left:1002.80px;top:566.50px" width="7" height="4" viewBox="0 0 7 4"><path d="M0 0H6.2L3.1 3.6Z" fill="#1a1a1a"/></svg><div class="chip" style="left:804.7px;top:577.8px;width:93.09999999999991px;height:11px;background:#e6e8eb;color:#222;border-radius:5.5px"><div style="position:absolute;left:0;top:1.1px;width:86.09999999999991px;text-align:center;line-height:10.7px;font-size:9.1px;white-space:nowrap;"></div></div><svg style="left:887.30px;top:581.50px" width="7" height="4" viewBox="0 0 7 4"><path d="M0 0H6.2L3.1 3.6Z" fill="#1a1a1a"/></svg><div class="chip" style="left:911.2px;top:577.8px;width:102.09999999999991px;height:11px;background:#e6e8eb;color:#222;border-radius:5.5px"><div style="position:absolute;left:0;top:1.1px;width:95.09999999999991px;text-align:center;line-height:10.7px;font-size:9.1px;white-space:nowrap;"></div></div><svg style="left:1002.80px;top:581.50px" width="7" height="4" viewBox="0 0 7 4"><path d="M0 0H6.2L3.1 3.6Z" fill="#1a1a1a"/></svg><div class="chip" style="left:804.7px;top:592.8px;width:93.09999999999991px;height:11px;background:#e6e8eb;color:#222;border-radius:5.5px"><div style="position:absolute;left:0;top:1.1px;width:86.09999999999991px;text-align:center;line-height:10.7px;font-size:9.1px;white-space:nowrap;"></div></div><svg style="left:887.30px;top:596.50px" width="7" height="4" viewBox="0 0 7 4"><path d="M0 0H6.2L3.1 3.6Z" fill="#1a1a1a"/></svg><div class="chip" style="left:911.2px;top:592.8px;width:102.09999999999991px;height:11px;background:#e6e8eb;color:#222;border-radius:5.5px"><div style="position:absolute;left:0;top:1.1px;width:95.09999999999991px;text-align:center;line-height:10.7px;font-size:9.1px;white-space:nowrap;"></div></div><svg style="left:1002.80px;top:596.50px" width="7" height="4" viewBox="0 0 7 4"><path d="M0 0H6.2L3.1 3.6Z" fill="#1a1a1a"/></svg><div class="chip" style="left:804.7px;top:608.05px;width:93.09999999999991px;height:11px;background:#e6e8eb;color:#222;border-radius:5.5px"><div style="position:absolute;left:0;top:1.1px;width:86.09999999999991px;text-align:center;line-height:10.7px;font-size:9.1px;white-space:nowrap;"></div></div><svg style="left:887.30px;top:611.75px" width="7" height="4" viewBox="0 0 7 4"><path d="M0 0H6.2L3.1 3.6Z" fill="#1a1a1a"/></svg><div class="chip" style="left:911.2px;top:608.05px;width:102.09999999999991px;height:11px;background:#e6e8eb;color:#222;border-radius:5.5px"><div style="position:absolute;left:0;top:1.1px;width:95.09999999999991px;text-align:center;line-height:10.7px;font-size:9.1px;white-space:nowrap;"></div></div><svg style="left:1002.80px;top:611.75px" width="7" height="4" viewBox="0 0 7 4"><path d="M0 0H6.2L3.1 3.6Z" fill="#1a1a1a"/></svg><div class="" style="left:315px;top:273.5px;width:1px;height:348px;background:rgba(0,0,0,0.16)"></div><div class="" style="left:316px;top:273.5px;width:1px;height:348px;background:rgba(0,0,0,0.05)"></div><div class="" style="left:447px;top:273.5px;width:1px;height:348px;background:rgba(0,0,0,0.16)"></div><div class="" style="left:448px;top:273.5px;width:1px;height:348px;background:rgba(0,0,0,0.05)"></div><div class="" style="left:564px;top:273.5px;width:1px;height:348px;background:rgba(0,0,0,0.16)"></div><div class="" style="left:565px;top:273.5px;width:1px;height:348px;background:rgba(0,0,0,0.05)"></div><div class="" style="left:681px;top:273.5px;width:1px;height:348px;background:rgba(0,0,0,0.16)"></div><div class="" style="left:682px;top:273.5px;width:1px;height:348px;background:rgba(0,0,0,0.05)"></div><div class="" style="left:797px;top:273.5px;width:1px;height:348px;background:rgba(0,0,0,0.16)"></div><div class="" style="left:798px;top:273.5px;width:1px;height:348px;background:rgba(0,0,0,0.05)"></div><div class="" style="left:904px;top:273.5px;width:1px;height:348px;background:rgba(0,0,0,0.16)"></div><div class="" style="left:905px;top:273.5px;width:1px;height:348px;background:rgba(0,0,0,0.05)"></div><div class="" style="left:1019px;top:273.5px;width:2px;height:348px;background:rgba(0,0,0,0.15)"></div><div class="" style="left:1090px;top:273.5px;width:1px;height:348px;background:rgba(0,0,0,0.16)"></div><div class="" style="left:1091px;top:273.5px;width:1px;height:348px;background:rgba(0,0,0,0.05)"></div><div class="" style="left:1172px;top:273.5px;width:1px;height:348px;background:rgba(0,0,0,0.16)"></div><div class="" style="left:1173px;top:273.5px;width:1px;height:348px;background:rgba(0,0,0,0.05)"></div><div class="" style="left:1246px;top:273.5px;width:1px;height:348px;background:rgba(0,0,0,0.16)"></div><div class="" style="left:1247px;top:273.5px;width:1px;height:348px;background:rgba(0,0,0,0.05)"></div><div class="" style="left:1410px;top:273.5px;width:1px;height:348px;background:rgba(0,0,0,0.16)"></div><div class="" style="left:1411px;top:273.5px;width:1px;height:348px;background:rgba(0,0,0,0.05)"></div><div class="" style="left:1480px;top:273.5px;width:1px;height:348px;background:rgba(0,0,0,0.16)"></div><div class="" style="left:1481px;top:273.5px;width:1px;height:348px;background:rgba(0,0,0,0.05)"></div><div class="" style="left:0px;top:621.5px;width:1536px;height:68px;background:#f9f9f9"></div><div class="" style="left:47px;top:633.2px;width:30px;height:14px;font-size:10px;color:#0b57d0;line-height:14px">Add</div><div class="" style="left:87px;top:628.8px;width:41px;height:22.5px;background:#fff;border:1px solid #80868b;border-radius:3px;font-size:10px;line-height:21px;text-align:center;color:#3c4043">1000</div><div class="" style="left:133px;top:636px;width:140px;height:14px;font-size:10px;color:#5f6368;line-height:14px;white-space:nowrap">more rows at the bottom</div><div class="" style="left:0px;top:689px;width:1536px;height:8px;background:#fff"></div><div class="" style="left:28px;top:689px;width:1px;height:8px;background:#dadce0"></div><div class="" style="left:30.5px;top:690px;width:892px;height:6px;background:#dadce0;border-radius:3px"></div><div class="" style="left:0px;top:698px;width:1536px;height:22px;background:#f9fbfd"></div><div class="" style="left:0px;top:697.5px;width:1536px;height:1px;background:#dfe1e3"></div><svg style="left:34px;top:707px" width="44" height="12" viewBox="0 0 44 12" fill="none" stroke="#444746" stroke-width="1.2"><path d="M5.5 2V9M2 5.5H9"/><path d="M29 3H39M29 5.6H39M29 8.2H39" stroke-width="1.1"/></svg><div class="" style="left:90.5px;top:698px;width:162px;height:22px;background:#e1e9f7"></div><div class="" style="left:99.3px;top:705px;width:150px;height:15px;font-size:10.4px;color:#0b57d0;line-height:15px;font-weight:bold;white-space:nowrap;letter-spacing:0.12px">lead tracking spreadsheet</div><svg style="left:238.5px;top:711px" width="8" height="5" viewBox="0 0 8 5"><path d="M0.2 0.2H5L2.6 3Z" fill="#0b57d0"/></svg><svg style="left:263px;top:708px" width="11" height="11" viewBox="0 0 11 11"><circle cx="5" cy="5" r="4.8" fill="#4169f0"/><path d="M6.8 3.6A2.3 2.3 0 1 0 6.8 6.4" fill="none" stroke="#fff" stroke-width="1.1"/></svg><div class="" style="left:278px;top:705.8px;width:170px;height:15px;font-size:11px;color:#444746;line-height:15px;white-space:nowrap">Learn more about Coefficient</div><svg style="left:428.5px;top:711px" width="8" height="5" viewBox="0 0 8 5"><path d="M0 0H7L3.5 4Z" fill="#444746"/></svg><div class="" style="left:1019.5px;top:605.8px;width:71.5px;height:15.7px;border:1.5px solid #1a73e8;border-bottom-width:2px;background:transparent"></div><div class="" style="left:1088px;top:618.3px;width:6px;height:6px;background:#0b57d0;border-radius:3px"></div>
</body></html>
